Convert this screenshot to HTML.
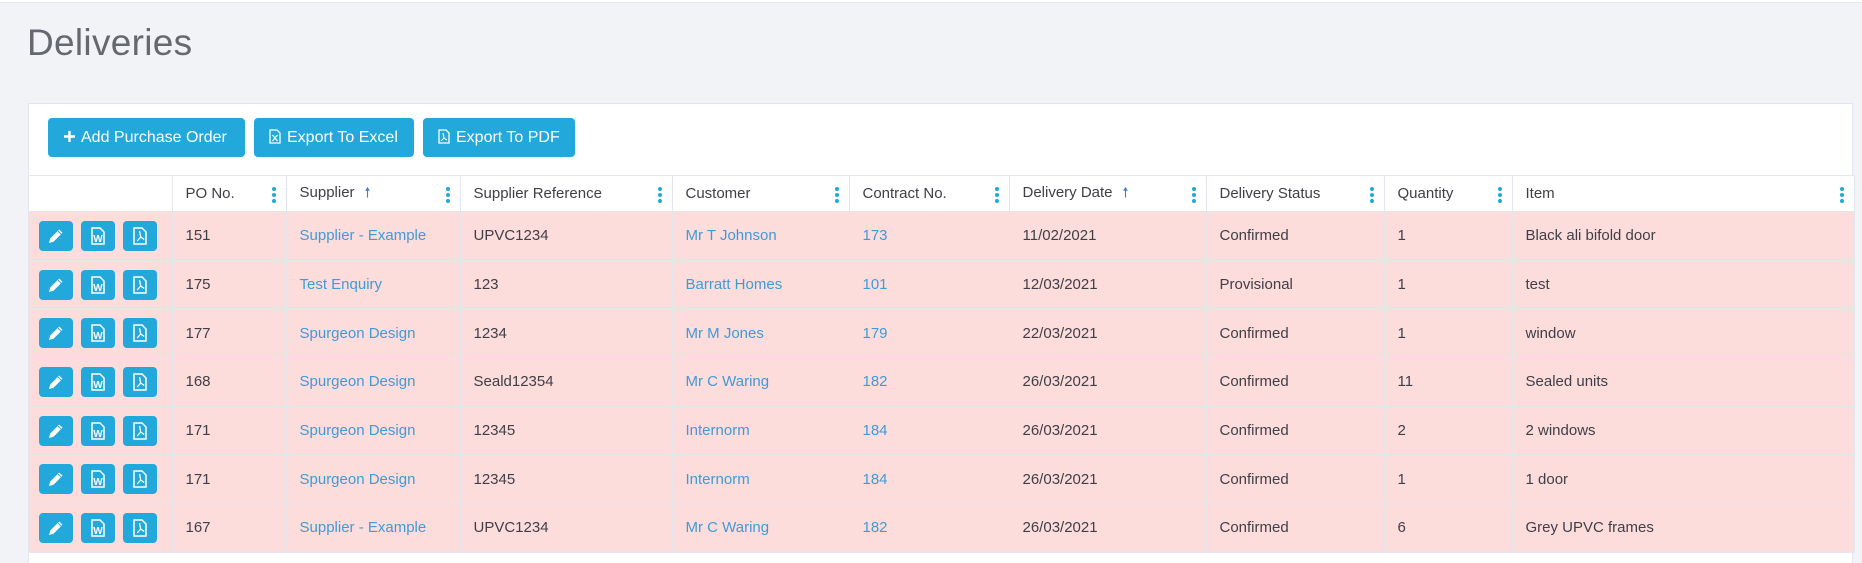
<!DOCTYPE html>
<html><head><meta charset="utf-8"><style>
*{box-sizing:border-box;margin:0;padding:0}
body{width:1862px;height:553px;overflow:hidden;background:#f2f3f7;font-family:"Liberation Sans",sans-serif;color:#3f4047;position:relative}
.top{position:absolute;left:0;top:0;width:1862px;height:3px;background:#fff;border-bottom:1px solid #e2e4ea}
h1{position:absolute;left:27px;top:22px;font-size:37px;font-weight:normal;color:#66686f;letter-spacing:0.3px}
.card{position:absolute;left:28px;top:103px;width:1825px;height:460px;background:#fff;border:1px solid #e3e6ef;border-bottom:none}
.btn{position:absolute;top:14px;height:39px;background:#22a8da;color:#fff;border-radius:4px;font-size:16px;line-height:39px;padding-left:15px}
table{position:absolute;left:0;top:71px;border-collapse:collapse;table-layout:fixed;width:1825px}
td,th{border:1px solid #e3e6ef;font-size:15px;text-align:left;font-weight:normal;padding-left:13px;white-space:nowrap;overflow:hidden;position:relative}
th{height:36px;background:#fff;color:#3f4047}
td{height:48.7px;background:#fddcdc}
tr td:first-child,tr th:first-child{border-left:none}
a{color:#3f9bd6;text-decoration:none}
.k{position:absolute;right:10px;top:11px;width:4px}
.k i{display:block;width:4px;height:4px;border-radius:2px;background:#22a8da;margin-bottom:2px}
.ar{color:#3f7fc4;margin-left:10px;font-size:14px}
.ab{display:inline-block;width:34px;height:30px;background:#22a8da;border-radius:4px;margin-right:8px;vertical-align:middle;position:relative}
.ab svg{position:absolute;left:7px;top:5px}
td.a{padding-left:10px}
</style></head><body>
<div class="top"></div>
<h1>Deliveries</h1>
<div class="card">
<div class="btn" style="left:19px;width:197px"><svg width="13" height="13" viewBox="0 0 13 13" style="vertical-align:-1px;margin-right:5px"><path d="M6.5 1v11M1 6.5h11" stroke="#fff" stroke-width="2.4"/></svg>Add Purchase Order</div>
<div class="btn" style="left:225px;width:160px"><svg width="12" height="15" viewBox="0 0 12 15" style="vertical-align:-2px;margin-right:6px"><path d="M1 1h7l3 3v10H1z" fill="none" stroke="#fff" stroke-width="1.3"/><path d="M3.5 6l5 6M8.5 6l-5 6" stroke="#fff" stroke-width="1.3"/></svg>Export To Excel</div>
<div class="btn" style="left:394px;width:152px"><svg width="12" height="15" viewBox="0 0 12 15" style="vertical-align:-2px;margin-right:6px"><path d="M1 1h7l3 3v10H1z" fill="none" stroke="#fff" stroke-width="1.3"/><path d="M5 4l1 5-3 3M6 9l3 2" fill="none" stroke="#fff" stroke-width="1.1"/></svg>Export To PDF</div>
<table>
<colgroup><col style="width:143px"><col style="width:114px"><col style="width:174px"><col style="width:212px"><col style="width:177px"><col style="width:160px"><col style="width:197px"><col style="width:178px"><col style="width:128px"><col style="width:342px"></colgroup>
<tr><th></th>
<th>PO No.<span class="k"><i></i><i></i><i></i></span></th>
<th>Supplier<span class="ar">🠕</span><span class="k"><i></i><i></i><i></i></span></th>
<th>Supplier Reference<span class="k"><i></i><i></i><i></i></span></th>
<th>Customer<span class="k"><i></i><i></i><i></i></span></th>
<th>Contract No.<span class="k"><i></i><i></i><i></i></span></th>
<th>Delivery Date<span class="ar">🠕</span><span class="k"><i></i><i></i><i></i></span></th>
<th>Delivery Status<span class="k"><i></i><i></i><i></i></span></th>
<th>Quantity<span class="k"><i></i><i></i><i></i></span></th>
<th>Item<span class="k"><i></i><i></i><i></i></span></th></tr>
</table>
</div>
<script>
var rows=[["151","Supplier - Example","UPVC1234","Mr T Johnson","173","11/02/2021","Confirmed","1","Black ali bifold door"],
["175","Test Enquiry","123","Barratt Homes","101","12/03/2021","Provisional","1","test"],
["177","Spurgeon Design","1234","Mr M Jones","179","22/03/2021","Confirmed","1","window"],
["168","Spurgeon Design","Seald12354","Mr C Waring","182","26/03/2021","Confirmed","11","Sealed units"],
["171","Spurgeon Design","12345","Internorm","184","26/03/2021","Confirmed","2","2 windows"],
["171","Spurgeon Design","12345","Internorm","184","26/03/2021","Confirmed","1","1 door"],
["167","Supplier - Example","UPVC1234","Mr C Waring","182","26/03/2021","Confirmed","6","Grey UPVC frames"]];
var pen='<svg width="20" height="20" viewBox="0 0 20 20"><path d="M3 17l1.2-4.5 9-9 3.3 3.3-9 9z" fill="#fff"/><path d="M12 5l3.3 3.3" stroke="#22a8da" stroke-width="1"/></svg>';
var w='<svg width="20" height="20" viewBox="0 0 20 20"><path d="M4 2h8l4 4v12H4z" fill="none" stroke="#fff" stroke-width="1.5"/><text x="10" y="16" font-size="10" font-weight="bold" fill="#fff" text-anchor="middle" font-family="Liberation Sans">W</text></svg>';
var p='<svg width="20" height="20" viewBox="0 0 20 20"><path d="M4 2h8l4 4v12H4z" fill="none" stroke="#fff" stroke-width="1.5"/><path d="M9.5 5l1.2 6-3.5 4M10.7 11l3.5 2.5" fill="none" stroke="#fff" stroke-width="1.3"/></svg>';
var t=document.querySelector('table'),h='';
rows.forEach(function(r){h+='<tr><td class="a"><span class="ab">'+pen+'</span><span class="ab">'+w+'</span><span class="ab">'+p+'</span></td>';
r.forEach(function(c,i){h+='<td>'+((i==1||i==3||i==4)?'<a>'+c+'</a>':c)+'</td>'});h+='</tr>'});
t.insertAdjacentHTML('beforeend',h);
</script>
</body></html>
